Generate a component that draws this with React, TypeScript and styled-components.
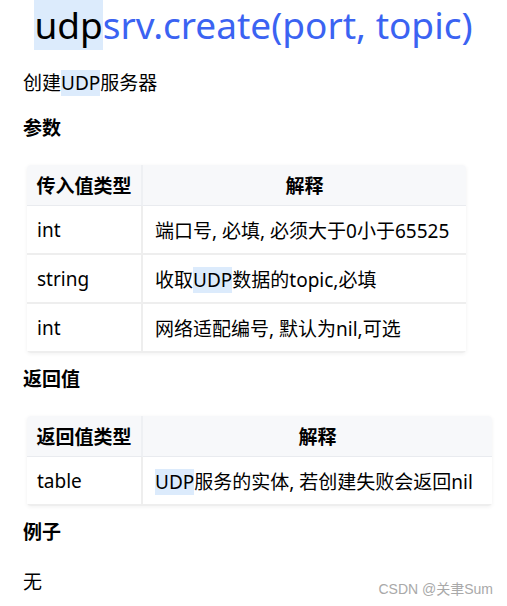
import React from 'react';
import styled, { createGlobalStyle } from 'styled-components';

const GlobalStyle = createGlobalStyle`
  html, body {
    margin: 0;
    padding: 0;
    background: #fff;
  }
  body {
    font-family: "Noto Sans", "Noto Sans CJK SC", sans-serif;
    color: #000;
  }
`;

const Page = styled.div`
  position: relative;
  width: 507px;
  height: 606px;
  overflow: hidden;
  padding: 0 23px;
  box-sizing: border-box;
`;

const Title = styled.h1`
  margin: 0;
  font-size: 37px;
  font-weight: 400;
  line-height: 50px;
  text-align: center;
  color: #3b63f2;
  white-space: nowrap;
`;

const Mark = styled.span<{ $dark?: boolean }>`
  background: #dcebfc;
  color: ${(p) => (p.$dark ? '#000' : 'inherit')};
`;

const Text = styled.p`
  margin: 20px 0 18px;
  font-size: 19px;
  line-height: 27px;
`;

const Heading = styled.h3`
  margin: 13px 0 23px;
  font-size: 19px;
  font-weight: 700;
  line-height: 27px;
`;

const Table = styled.table<{ $width: number }>`
  width: ${(p) => p.$width}px;
  margin-left: 4px;
  border-collapse: separate;
  border-spacing: 0;
  border-radius: 4px;
  overflow: hidden;
  box-shadow: 0 1px 4px rgba(0, 0, 0, 0.06);
  font-size: 19px;
  table-layout: fixed;
`;

const Head = styled.th<{ $first?: boolean }>`
  height: 41px;
  padding: 0 8px;
  background: #f7f8fa;
  font-weight: 700;
  text-align: center;
  border-bottom: 1px solid #e9ebef;
  border-right: ${(p) => (p.$first ? '2px solid #eef0f3' : 'none')};
  box-sizing: border-box;
  width: ${(p) => (p.$first ? '116px' : 'auto')};
`;

const Cell = styled.td<{ $first?: boolean }>`
  height: 49px;
  padding: 0 8px 0 ${(p) => (p.$first ? '10px' : '12px')};
  border-bottom: 2px solid #eeeeee;
  border-right: ${(p) => (p.$first ? '2px solid #eeeeee' : 'none')};
  box-sizing: border-box;
  white-space: nowrap;
`;

const Watermark = styled.div`
  position: absolute;
  right: 14px;
  bottom: 8px;
  font-family: "Liberation Sans", "Noto Sans CJK SC", sans-serif;
  font-size: 14px;
  color: #a9a9a9;
`;

const params = [
  ['int', '端口号, 必填, 必须大于0小于65525'],
  ['string', null],
  ['int', '网络适配编号, 默认为nil,可选'],
];

const App: React.FC = () => (
  <Page>
    <GlobalStyle />
    <Title>
      <Mark $dark>udp</Mark>srv.create(port, topic)
    </Title>
    <Text>
      创建<Mark>UDP</Mark>服务器
    </Text>
    <Heading>参数</Heading>
    <Table $width={439}>
      <thead>
        <tr>
          <Head $first>传入值类型</Head>
          <Head>解释</Head>
        </tr>
      </thead>
      <tbody>
        {params.map(([type, desc], i) => (
          <tr key={i}>
            <Cell $first>{type}</Cell>
            <Cell>
              {desc ?? (
                <>
                  收取<Mark>UDP</Mark>数据的topic,必填
                </>
              )}
            </Cell>
          </tr>
        ))}
      </tbody>
    </Table>
    <Heading>返回值</Heading>
    <Table $width={465}>
      <thead>
        <tr>
          <Head $first>返回值类型</Head>
          <Head>解释</Head>
        </tr>
      </thead>
      <tbody>
        <tr>
          <Cell $first>table</Cell>
          <Cell>
            <Mark>UDP</Mark>服务的实体, 若创建失败会返回nil
          </Cell>
        </tr>
      </tbody>
    </Table>
    <Heading>例子</Heading>
    <Text>无</Text>
    <Watermark>CSDN @关聿Sum</Watermark>
  </Page>
);

export default App;
